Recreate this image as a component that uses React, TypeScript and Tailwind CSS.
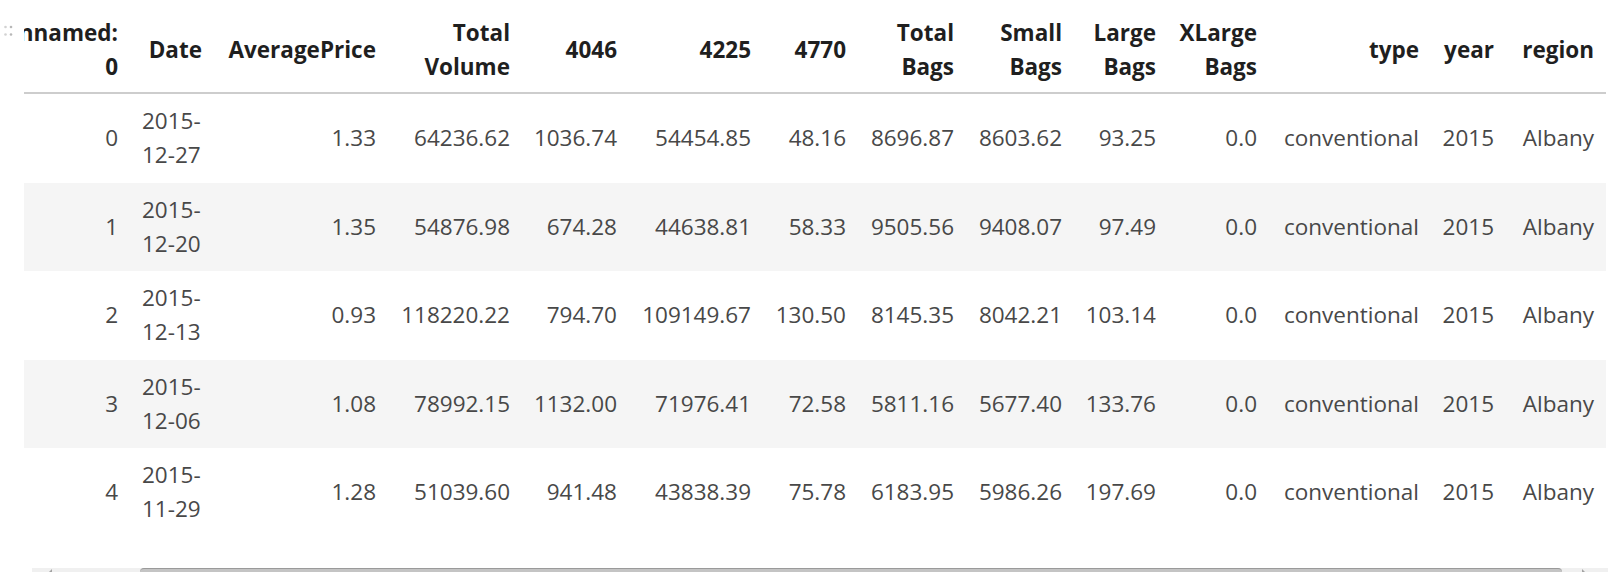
const COLS = "grid-cols-[142px_84px_174px_134px_107px_134px_95px_108px_108px_94px_101px_162px_75px_100px]";

type Row = {
  idx: number;
  date: [string, string];
  vals: string[];
};

const HEAD: string[][] = [
  ["Unnamed:", "0"],
  ["Date"],
  ["AveragePrice"],
  ["Total", "Volume"],
  ["4046"],
  ["4225"],
  ["4770"],
  ["Total", "Bags"],
  ["Small", "Bags"],
  ["Large", "Bags"],
  ["XLarge", "Bags"],
  ["type"],
  ["year"],
  ["region"],
];

const ROWS: Row[] = [
  { idx: 0, date: ["2015-", "12-27"], vals: ["1.33", "64236.62", "1036.74", "54454.85", "48.16", "8696.87", "8603.62", "93.25", "0.0", "conventional", "2015", "Albany"] },
  { idx: 1, date: ["2015-", "12-20"], vals: ["1.35", "54876.98", "674.28", "44638.81", "58.33", "9505.56", "9408.07", "97.49", "0.0", "conventional", "2015", "Albany"] },
  { idx: 2, date: ["2015-", "12-13"], vals: ["0.93", "118220.22", "794.70", "109149.67", "130.50", "8145.35", "8042.21", "103.14", "0.0", "conventional", "2015", "Albany"] },
  { idx: 3, date: ["2015-", "12-06"], vals: ["1.08", "78992.15", "1132.00", "71976.41", "72.58", "5811.16", "5677.40", "133.76", "0.0", "conventional", "2015", "Albany"] },
  { idx: 4, date: ["2015-", "11-29"], vals: ["1.28", "51039.60", "941.48", "43838.39", "75.78", "6183.95", "5986.26", "197.69", "0.0", "conventional", "2015", "Albany"] },
];

function Handle() {
  return (
    <svg width="9" height="13" viewBox="0 0 9 13" className="block">
      <circle cx="1.5" cy="2" r="1.3" fill="#d2d2d2" />
      <circle cx="7" cy="2" r="1.3" fill="#b8b8b8" />
      <circle cx="1.5" cy="9.5" r="1.3" fill="#d2d2d2" />
      <circle cx="7" cy="9.5" r="1.3" fill="#b8b8b8" />
    </svg>
  );
}

function Header() {
  return (
    <div className={`grid ${COLS} border-b-2 border-[#cdcdcd] font-bold text-[#1f1f1f]`}>
      {HEAD.map((h, i) => (
        <div key={i} className="flex h-[92px] items-center justify-end whitespace-nowrap pt-4 pb-2 pr-3 text-right">
          <div>
            {h.map((line, j) => (
              <div key={j}>{line}</div>
            ))}
          </div>
        </div>
      ))}
    </div>
  );
}

function DataRow({ row }: { row: Row }) {
  const odd = row.idx % 2 === 1;
  return (
    <div className={`grid ${COLS} h-[88.5px] items-center text-[#484848] ${odd ? "bg-[#f5f5f5]" : "bg-white"}`}>
      <div className="pr-3 text-right">{row.idx}</div>
      <div className="whitespace-nowrap pl-3 text-left">
        <div>{row.date[0]}</div>
        <div>{row.date[1]}</div>
      </div>
      {row.vals.map((v, i) => (
        <div key={i} className="whitespace-nowrap pr-3 text-right">{v}</div>
      ))}
    </div>
  );
}

function Scrollbar() {
  return (
    <div className="ml-2 mt-[31px] flex h-[14px] w-[1576px] shrink-0 items-start bg-[#f0f0f0]">
      <div className="flex w-[108px] justify-start pl-[14px] pt-[1px]">
        <svg width="8" height="10" viewBox="0 0 8 10"><path d="M6 0 L1 5 L6 10 Z" fill="#a3a3a3" /></svg>
      </div>
      <div className="h-[10px] w-[1422px] rounded-sm border-t border-[#9a9a9a] bg-[#c4c4c4]" />
      <div className="flex flex-1 justify-end pr-[20px] pt-[1px]">
        <svg width="8" height="10" viewBox="0 0 8 10"><path d="M2 0 L7 5 L2 10 Z" fill="#a3a3a3" /></svg>
      </div>
    </div>
  );
}

export default function App() {
  return (
    <div className="flex h-[572px] w-[1623px] overflow-hidden bg-white text-[22.5px] leading-[34px] [font-family:'Open_Sans','Noto_Sans',sans-serif]">
      <div className="w-6 shrink-0 pl-[4px] pt-[25px]">
        <Handle />
      </div>
      <div className="flex flex-col">
        <div className="w-[1584px] shrink-0 overflow-hidden">
          <div className="-ml-[36px] w-[1618px]">
            <Header />
            {ROWS.map((r) => (
              <DataRow key={r.idx} row={r} />
            ))}
          </div>
        </div>
        <Scrollbar />
      </div>
    </div>
  );
}
